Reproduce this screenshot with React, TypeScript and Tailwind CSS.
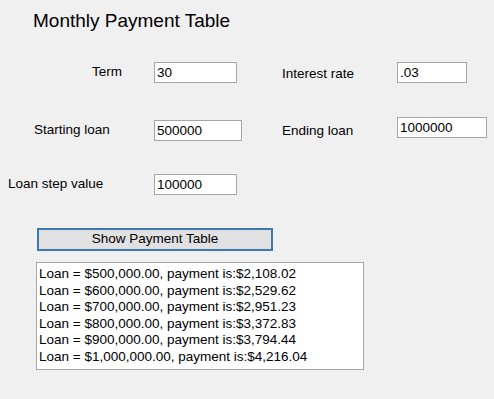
const font = { fontFamily: '"Liberation Sans", Arial, sans-serif' };

const rows = [
  'Loan = $500,000.00, payment is:$2,108.02',
  'Loan = $600,000.00, payment is:$2,529.62',
  'Loan = $700,000.00, payment is:$2,951.23',
  'Loan = $800,000.00, payment is:$3,372.83',
  'Loan = $900,000.00, payment is:$3,794.44',
  'Loan = $1,000,000.00, payment is:$4,216.04',
];

function Field({ value, width, className = '' }: { value: string; width: string; className?: string }) {
  return (
    <div
      className={`h-[21px] ${width} border border-[#a6a6a6] bg-white pl-[2px] text-[13.5px] leading-[19px] text-black ${className}`}
    >
      {value}
    </div>
  );
}

export default function App() {
  return (
    <div className="w-[494px] h-[399px] bg-[#f0f0f0] text-black overflow-hidden" style={font}>
      <div className="pl-[33px] pt-[10px] text-[19px] leading-[22px]">Monthly Payment Table</div>

      {/* row 1 */}
      <div className="mt-[30px] grid grid-cols-[154px_128px_115px_1fr] items-start text-[13.5px] leading-[16px]">
        <div className="pl-[92px] pt-[2px]">Term</div>
        <Field value="30" width="w-[83px]" />
        <div className="pt-[4px]">Interest rate</div>
        <Field value=".03" width="w-[70px]" />
      </div>

      {/* row 2 */}
      <div className="mt-[34px] grid grid-cols-[154px_128px_115px_1fr] items-start text-[13.5px] leading-[16px]">
        <div className="pl-[34px] pt-[5px]">Starting loan</div>
        <Field value="500000" width="w-[88px]" className="mt-[3px]" />
        <div className="pt-[6px]">Ending loan</div>
        <Field value="1000000" width="w-[90px]" />
      </div>

      {/* row 3 */}
      <div className="mt-[33px] grid grid-cols-[154px_1fr] items-start text-[13.5px] leading-[16px]">
        <div className="pl-[8px] pt-[2px]">Loan step value</div>
        <Field value="100000" width="w-[83px]" />
      </div>

      <div className="ml-[37px] mt-[33px] flex h-[23px] w-[236px] items-center justify-center border-2 border-[#3f79b3] bg-[#e1e1e1] text-[13.5px]">
        Show Payment Table
      </div>

      <div className="ml-[36px] mt-[11px] h-[108px] w-[328px] border border-[#a6a6a6] bg-white pl-[2px] pt-[3px] text-[13.5px] leading-[16.5px]">
        {rows.map((r) => (
          <div key={r}>{r}</div>
        ))}
      </div>
    </div>
  );
}
